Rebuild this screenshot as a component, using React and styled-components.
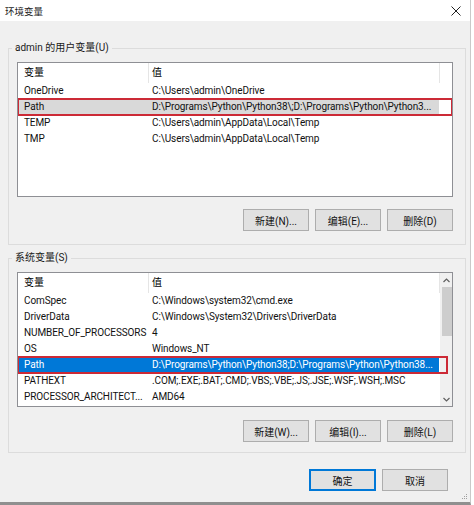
import React from "react";
import styled, { createGlobalStyle } from "styled-components";

const GlobalStyle = createGlobalStyle`
  html, body {
    margin: 0;
    background: #ffffff;
  }
  body {
    font-family: Roboto, "Noto Sans CJK SC", sans-serif;
    font-size: 10px;
    color: #000;
  }
`;

const Window = styled.div`
  position: relative;
  width: 471px;
  height: 505px;
  box-sizing: border-box;
  display: flex;
  flex-direction: column;
  background: #f0f0f0;
  border-right: 1px solid #c9c9c9;
  border-bottom: 3px solid #8f8f8f;
`;

const TitleBar = styled.div`
  height: 21px;
  flex: none;
  display: flex;
  align-items: center;
  justify-content: space-between;
  padding: 0 9px 0 5px;
  background: #ffffff;
  font-size: 9.5px;
  color: #1a1a1a;
`;

const Body = styled.div`
  flex: 1;
  display: flex;
  flex-direction: column;
  padding: 19px 0 0 8px;
`;

const Group = styled.fieldset`
  width: 458px;
  box-sizing: border-box;
  margin: ${(p) => (p.$first ? "0" : "5px 0 0")};
  padding: 6px 12px ${(p) => p.$bottom}px 8px;
  border: 1px solid #dcdcdc;
  min-width: 0;
  display: flex;
  flex-direction: column;
`;

const Legend = styled.legend`
  padding: 0 3px;
  margin-left: -5px;
  line-height: 16px;
  font-size: 10px;
  color: #1a1a1a;
`;

const ListBox = styled.div`
  height: 135px;
  box-sizing: border-box;
  border: 1px solid #8e8f94;
  background: #ffffff;
  display: flex;
  overflow: hidden;
`;

const ListContent = styled.div`
  flex: 1;
  display: flex;
  flex-direction: column;
`;

const HeaderRow = styled.div`
  height: 20px;
  flex: none;
  display: flex;
`;

const HeaderCell = styled.div`
  width: ${(p) => p.$w}px;
  box-sizing: border-box;
  padding-left: ${(p) => p.$pad}px;
  border-right: 1px solid #e5e5e5;
  line-height: 20px;
  white-space: nowrap;
`;

const Row = styled.div`
  position: relative;
  height: 16px;
  flex: none;
  display: flex;
  color: ${(p) => (p.$active ? "#ffffff" : "#111111")};

  &::after {
    content: "";
    display: ${(p) => (p.$marked ? "block" : "none")};
    position: absolute;
    top: -1px;
    bottom: -1px;
    left: -1px;
    right: ${(p) => p.$markRight}px;
    border: 2px solid #cc2a36;
    pointer-events: none;
  }
`;

const Cell = styled.div`
  width: ${(p) => p.$w}px;
  box-sizing: border-box;
  padding-left: ${(p) => p.$pad}px;
  line-height: 16px;
  white-space: nowrap;
  overflow: hidden;
  letter-spacing: -0.1px;
  background: ${(p) =>
    p.$active ? "#0078d7" : p.$selected ? "#d9d9d9" : "transparent"};
`;

const ScrollBar = styled.div`
  width: 13px;
  flex: none;
  display: flex;
  flex-direction: column;
  align-items: center;
  background: #f0f0f0;
`;

const ScrollArrow = styled.div`
  height: 14px;
  flex: none;
  display: flex;
  align-items: center;
  justify-content: center;
`;

const ScrollTrack = styled.div`
  flex: 1;
  width: 100%;
  display: flex;
  flex-direction: column;
  align-items: center;
`;

const Thumb = styled.div`
  width: 10px;
  height: 49px;
  background: #cdcdcd;
`;

const ButtonRow = styled.div`
  display: flex;
  justify-content: flex-end;
  gap: ${(p) => p.$gap || 6}px;
  margin-top: ${(p) => p.$top}px;
`;

const Button = styled.div`
  width: ${(p) => p.$w || 66}px;
  height: 22px;
  box-sizing: border-box;
  display: flex;
  align-items: center;
  justify-content: center;
  background: #e1e1e1;
  border: ${(p) => (p.$default ? "2px solid #0078d7" : "1px solid #adadad")};
  font-size: 10px;
  color: #111;
`;

const Footer = styled.div`
  display: flex;
  justify-content: flex-end;
  gap: 6px;
  padding: 16px 22px 11px 0;
`;

const Grip = styled.svg`
  position: absolute;
  right: 2px;
  bottom: 2px;
`;

const Chevron = ({ up }) => (
  <svg width="7" height="5" viewBox="0 0 7 5">
    <path
      d={up ? "M0.5 4L3.5 1L6.5 4" : "M0.5 1L3.5 4L6.5 1"}
      fill="none"
      stroke="#606060"
      strokeWidth="1.2"
    />
  </svg>
);

const userVars = [
  { name: "OneDrive", value: "C:\\Users\\admin\\OneDrive" },
  {
    name: "Path",
    value: "D:\\Programs\\Python\\Python38\\;D:\\Programs\\Python\\Python3...",
    selected: true,
    marked: true,
  },
  { name: "TEMP", value: "C:\\Users\\admin\\AppData\\Local\\Temp" },
  { name: "TMP", value: "C:\\Users\\admin\\AppData\\Local\\Temp" },
];

const systemVars = [
  { name: "ComSpec", value: "C:\\Windows\\system32\\cmd.exe" },
  { name: "DriverData", value: "C:\\Windows\\System32\\Drivers\\DriverData" },
  { name: "NUMBER_OF_PROCESSORS", value: "4" },
  { name: "OS", value: "Windows_NT" },
  {
    name: "Path",
    value: "D:\\Programs\\Python\\Python38;D:\\Programs\\Python\\Python38...",
    active: true,
    marked: true,
  },
  { name: "PATHEXT", value: ".COM;.EXE;.BAT;.CMD;.VBS;.VBE;.JS;.JSE;.WSF;.WSH;.MSC" },
  { name: "PROCESSOR_ARCHITECT...", value: "AMD64" },
];

const VarList = ({ rows, scroll }) => (
  <ListBox>
    <ListContent>
      <HeaderRow>
        <HeaderCell $w={131} $pad={6}>变量</HeaderCell>
        <HeaderCell $w={291} $pad={3}>值</HeaderCell>
      </HeaderRow>
      {rows.map((r) => (
        <Row
          key={r.name}
          $active={r.active}
          $marked={r.marked}
          $markRight={scroll ? -8 : -1}
        >
          <Cell $w={131} $pad={6} $selected={r.selected} $active={r.active}>
            {r.name}
          </Cell>
          <Cell $w={290} $pad={3} $selected={r.selected} $active={r.active}>
            {r.value}
          </Cell>
        </Row>
      ))}
    </ListContent>
    {scroll && (
      <ScrollBar>
        <ScrollArrow>
          <Chevron up />
        </ScrollArrow>
        <ScrollTrack>
          <Thumb />
        </ScrollTrack>
        <ScrollArrow>
          <Chevron />
        </ScrollArrow>
      </ScrollBar>
    )}
  </ListBox>
);

export default function App() {
  return (
    <>
      <GlobalStyle />
      <Window>
        <TitleBar>
          <span>环境变量</span>
          <svg width="10" height="10" viewBox="0 0 10 10">
            <path d="M0.5 0.5L9.5 9.5M9.5 0.5L0.5 9.5" stroke="#222" strokeWidth="1" />
          </svg>
        </TitleBar>
        <Body>
          <Group $first $bottom={13}>
            <Legend>admin 的用户变量(U)</Legend>
            <VarList rows={userVars} />
            <ButtonRow $top={12}>
              <Button>新建(N)...</Button>
              <Button>编辑(E)...</Button>
              <Button>删除(D)</Button>
            </ButtonRow>
          </Group>
          <Group $bottom={10}>
            <Legend>系统变量(S)</Legend>
            <VarList rows={systemVars} scroll />
            <ButtonRow $top={13}>
              <Button>新建(W)...</Button>
              <Button>编辑(I)...</Button>
              <Button>删除(L)</Button>
            </ButtonRow>
          </Group>
        </Body>
        <Footer>
          <Button $w={67} $default>确定</Button>
          <Button>取消</Button>
        </Footer>
        <Grip width="6" height="6" viewBox="0 0 6 6">
          <rect x="4" y="0" width="1" height="1" fill="#a0a0a0" />
          <rect x="2" y="2" width="1" height="1" fill="#a0a0a0" />
          <rect x="4" y="2" width="1" height="1" fill="#a0a0a0" />
          <rect x="0" y="4" width="1" height="1" fill="#a0a0a0" />
          <rect x="2" y="4" width="1" height="1" fill="#a0a0a0" />
          <rect x="4" y="4" width="1" height="1" fill="#a0a0a0" />
        </Grip>
      </Window>
    </>
  );
}
